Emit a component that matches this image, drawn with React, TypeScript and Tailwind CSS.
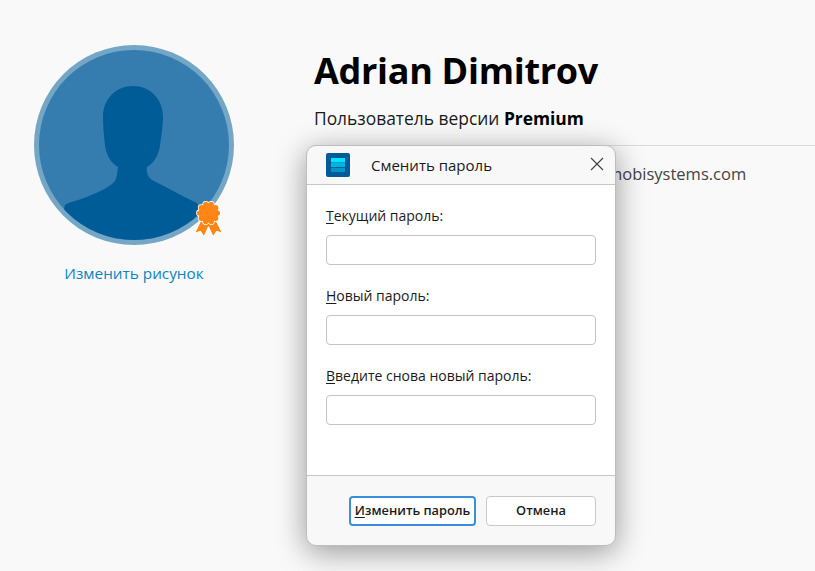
import React from "react";

const font = { fontFamily: '"Open Sans", "Noto Sans", sans-serif' };

const lobes = [0, 36, 72, 108, 144, 180, 216, 252, 288, 324].map((deg) => ({
  x: 15.5 + 9 * Math.cos((deg * Math.PI) / 180),
  y: 13 + 9 * Math.sin((deg * Math.PI) / 180),
}));

function Avatar() {
  return (
    <div className="relative w-[200px] h-[200px]">
      <svg viewBox="0 0 200 200" className="w-[200px] h-[200px]">
        <defs>
          <clipPath id="inner">
            <circle cx="100" cy="100" r="95" />
          </clipPath>
        </defs>
        <circle cx="100" cy="100" r="100" fill="#74a6c6" />
        <circle cx="100" cy="100" r="95" fill="#357dae" />
        <path
          clipPath="url(#inner)"
          d="M99 41C82 41 69 54 69 72C69 82 70 92 71 100C72 110 77 118 84 122C83 128 83 132 81 136C77 141 66 147 50 153C42 156 35 157 31 160L20 200L180 200L163 158C150 152 130 141 118 135C114 132 112 128 113 122C120 118 125 110 126 100C127 92 129 82 129 72C129 54 116 41 99 41z"
          fill="#005c97"
        />
      </svg>
      <svg viewBox="0 0 31 38" className="absolute left-[159px] top-[155px] w-[31px] h-[38px]">
        <path d="M8 20L1.500 33L7.500 31.500L11 37L15.500 27L20 37L23.500 31.500L29.500 33L23 20z" fill="#ff8614" stroke="#fff" strokeWidth="1.200" strokeLinejoin="round" />
        {lobes.map((l, i) => (
          <circle key={i} cx={l.x} cy={l.y} r="3.400" fill="#fff" />
        ))}
        {lobes.map((l, i) => (
          <circle key={i} cx={l.x} cy={l.y} r="2.600" fill="#ff8614" />
        ))}
        <circle cx="15.500" cy="13" r="9.800" fill="#ff8614" />
      </svg>
    </div>
  );
}

function Field({ hotkey, label }: { hotkey: string; label: string }) {
  return (
    <div className="flex flex-col h-[80px]">
      <div className="h-[20px] text-[14px] leading-[20px] text-[#1b1b1b]">
        <span className="underline underline-offset-2">{hotkey}</span>
        {label}
      </div>
      <div className="mt-[9px] h-[30px] rounded-[4px] border border-[#c4c4c4] bg-white" />
    </div>
  );
}

function PasswordDialog() {
  return (
    <div className="absolute left-[306px] top-[145px] w-[310px] h-[401px] flex flex-col rounded-[10px] border border-[#bdbdbd] bg-[#f8f8f8] overflow-hidden shadow-[0_6px_30px_rgba(0,0,0,0.4)]">
      <div className="h-[39px] shrink-0 flex items-center pl-[19px] pr-[11px] border-b border-[#c6c6c6]">
        <svg viewBox="0 0 24 24" className="w-[24px] h-[24px]">
          <rect width="24" height="24" rx="2" fill="#005c97" />
          <rect x="5" y="5" width="14" height="4.500" fill="#00e5ff" />
          <rect x="5" y="10" width="14" height="4" fill="#00b4dc" />
          <rect x="5" y="15" width="14" height="4" fill="#0094cc" />
        </svg>
        <span className="ml-[21px] text-[15px] text-[#1b1b1b]">Сменить пароль</span>
        <svg viewBox="0 0 14 14" className="ml-auto -mt-[2px] w-[14px] h-[14px]" fill="none" stroke="#444" strokeWidth="1.200">
          <path d="M1 1l12 12M13 1L1 13" />
        </svg>
      </div>
      <div className="h-[291px] shrink-0 bg-white border-b border-[#c6c6c6] px-[19px] pt-[21px]">
        <Field hotkey="Т" label="екущий пароль:" />
        <Field hotkey="Н" label="овый пароль:" />
        <Field hotkey="В" label="ведите снова новый пароль:" />
      </div>
      <div className="flex-1 flex justify-end gap-[10px] pr-[19px] pt-[20px]">
        <div className="w-[127px] h-[30px] flex items-center justify-center rounded-[4px] border-2 border-[#3b8fd9] bg-white text-[12.800px] font-semibold text-[#1b1b1b]">
          <span>
            <span className="underline underline-offset-2">И</span>зменить пароль
          </span>
        </div>
        <div className="w-[110px] h-[30px] flex items-center justify-center rounded-[4px] border border-[#c8c8c8] bg-white text-[12.800px] font-semibold text-[#1b1b1b]">
          Отмена
        </div>
      </div>
    </div>
  );
}

export default function App() {
  return (
    <div className="relative w-[815px] h-[571px] overflow-hidden bg-[#f9f9f9] flex" style={font}>
      <div className="w-[314px] shrink-0 pl-[34px] pt-[45px]">
        <Avatar />
        <div className="mt-[17px] w-[200px] text-center text-[15.300px] leading-[22px] text-[#0a84c1]">Изменить рисунок</div>
      </div>
      <div className="flex-1 pt-[45px]">
        <div className="text-[36px] leading-[52px] font-bold tracking-[-0.3px] text-black">Adrian Dimitrov</div>
        <div className="mt-[9px] text-[17.400px] leading-[24px] text-[#1b1b1b]">
          Пользователь версии <span className="font-bold text-black">Premium</span>
        </div>
        <div className="mt-[15px] h-px bg-[#dcdcdc]" />
        <div className="mt-[16px] pl-[293px] text-[16.500px] leading-[24px] text-[#444]">mobisystems.com</div>
      </div>
      <PasswordDialog />
    </div>
  );
}
